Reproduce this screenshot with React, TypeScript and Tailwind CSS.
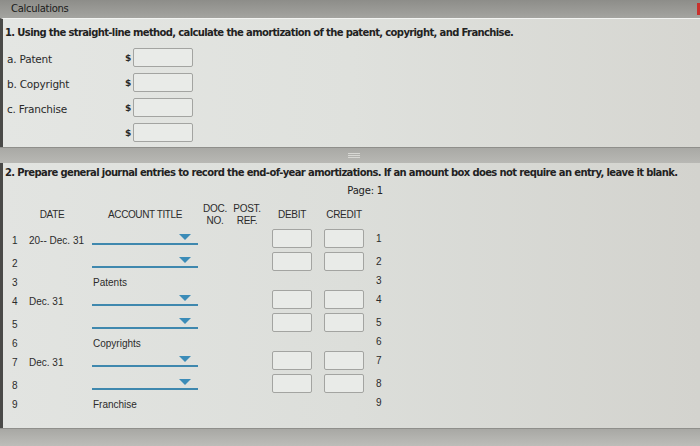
import React from "react";

function Box({ w = "w-[40px]" }: { w?: string }) {
  return (
    <div className={`${w} h-[19px] rounded-[2px] border-[1.5px] border-[#a3a4a1] bg-[#e9ebe8]`} />
  );
}

function Dropdown() {
  return (
    <div className="relative h-[17px] w-[106px] border-b-2 border-[#3f88ae]">
      <svg
        className="absolute right-[7px] top-[6px] h-[6px] w-[12px]"
        viewBox="0 0 12 6"
        xmlns="http://www.w3.org/2000/svg"
      >
        <path d="M0 0h12L6 6z" fill="#3b8cb8" />
      </svg>
    </div>
  );
}

interface RowProps {
  num: number;
  date?: string;
  account?: string;
  kind: "entry" | "text";
}

function JournalRow({ num, date, account, kind }: RowProps) {
  const entry = kind === "entry";
  const pad = entry ? "pt-[7px]" : "pt-[3px]";
  return (
    <div className={`flex items-start ${entry ? "h-[23px]" : "h-[15px]"}`}>
      <div className={`w-[17px] ${pad} leading-[12px]`}>{num}</div>
      <div className={`w-[63px] ${pad} leading-[12px]`}>{date}</div>
      <div className="w-[106px]">
        {entry ? (
          <Dropdown />
        ) : (
          <div className={`${pad} pl-[1px] leading-[12px]`}>{account}</div>
        )}
      </div>
      <div className="w-[74px]" />
      <div className="w-[40px] pt-[1px]">{entry && <Box />}</div>
      <div className="w-[12px]" />
      <div className="w-[40px] pt-[1px]">{entry && <Box />}</div>
      <div className="w-[12px]" />
      <div className={`${entry ? "pt-[5px]" : "pt-[1px]"} leading-[12px]`}>{num}</div>
    </div>
  );
}

const rows: RowProps[] = [
  { num: 1, date: "20-- Dec. 31", kind: "entry" },
  { num: 2, kind: "entry" },
  { num: 3, account: "Patents", kind: "text" },
  { num: 4, date: "Dec. 31", kind: "entry" },
  { num: 5, kind: "entry" },
  { num: 6, account: "Copyrights", kind: "text" },
  { num: 7, date: "Dec. 31", kind: "entry" },
  { num: 8, kind: "entry" },
  { num: 9, account: "Franchise", kind: "text" },
];

export default function App() {
  return (
    <div className="relative flex h-[446px] w-[700px] flex-col overflow-hidden bg-[#d9dad6] font-['DejaVu_Sans',sans-serif] text-[#1f1f1f]">
      {/* header */}
      <div className="relative h-[18px] shrink-0 bg-linear-to-b from-[#8d8d89] to-[#a4a4a0] pl-[11px] text-[10px] leading-[17px] tracking-[-0.3px] text-[#1b1b1b]">
        Calculations
        <div className="absolute right-0 top-[3px] h-[12px] w-[3px] bg-[#c9302c]" />
      </div>

      {/* part 1 */}
      <div className="h-[129px] shrink-0 border-l-[3px] border-t border-[#4a4a48] border-t-[#f2f3f1] bg-linear-to-r from-[#e4e6e3] via-[#dfe1dd] to-[#d6d6d1] pl-[2px]">
        <div className="whitespace-nowrap pt-[7px] text-[10px] font-bold leading-[14px] tracking-[-0.63px] text-[#222]">
          1. Using the straight-line method, calculate the amortization of the patent, copyright, and Franchise.
        </div>
        <div className="mt-[8px] flex flex-col pl-[2px] text-[10.5px] tracking-[-0.2px] text-[#2a2a2a]">
          {["a. Patent", "b. Copyright", "c. Franchise", ""].map((label, i) => (
            <div key={i} className="flex h-[25px] items-start">
              <div className="w-[118px] pt-[5px] leading-[12px]">{label}</div>
              <div className="w-[8px] pt-[4px] text-[9px] font-bold leading-[12px]">$</div>
              <Box w="w-[60px]" />
            </div>
          ))}
        </div>
      </div>

      {/* divider */}
      <div className="relative h-[16px] shrink-0 border-t border-[#8f8f8b] bg-linear-to-b from-[#a9a9a5] to-[#b8b8b4]">
        <div className="absolute left-[348px] top-[5px] flex w-[12px] flex-col gap-[1px]">
          <div className="h-px bg-[#d8d8d4]" />
          <div className="h-px bg-[#d8d8d4]" />
          <div className="h-px bg-[#d8d8d4]" />
        </div>
      </div>

      {/* part 2 */}
      <div className="flex-1 border-l-[3px] border-[#4a4a48] bg-linear-to-r from-[#e2e4e1] via-[#dcdeda] to-[#d3d3ce] pl-[2px]">
        <div className="whitespace-nowrap pt-[3px] text-[10px] font-bold leading-[14px] tracking-[-0.63px] text-[#222]">
          2. Prepare general journal entries to record the end-of-year amortizations. If an amount box does not require an entry, leave it blank.
        </div>
        <div className="mt-[4px] w-[378px] text-right text-[10px] leading-[14px] tracking-[-0.2px] text-[#222]">
          Page: 1
        </div>

        <div className="pl-[7px] font-['Liberation_Sans',sans-serif] text-[10px] text-[#2b2b2b]">
          {/* table head */}
          <div className="mt-[4px] flex h-[26px] items-center leading-[12px]">
            <div className="w-[80px] text-center tracking-[-0.3px]">DATE</div>
            <div className="w-[106px] text-center tracking-[-0.4px]">ACCOUNT TITLE</div>
            <div className="w-[34px] text-center tracking-[-0.3px]">
              DOC.
              <br />
              NO.
            </div>
            <div className="w-[30px] text-center tracking-[-0.3px]">
              POST.
              <br />
              REF.
            </div>
            <div className="w-[10px]" />
            <div className="w-[40px] text-center tracking-[-0.3px]">DEBIT</div>
            <div className="w-[12px]" />
            <div className="w-[40px] text-center tracking-[-0.3px]">CREDIT</div>
          </div>

          {rows.map((r) => (
            <JournalRow key={r.num} {...r} />
          ))}
        </div>
      </div>

      {/* bottom */}
      <div className="h-[18px] shrink-0 border-t border-[#8f8f8b] bg-linear-to-b from-[#a8a8a4] to-[#bdbdb9]" />
    </div>
  );
}
